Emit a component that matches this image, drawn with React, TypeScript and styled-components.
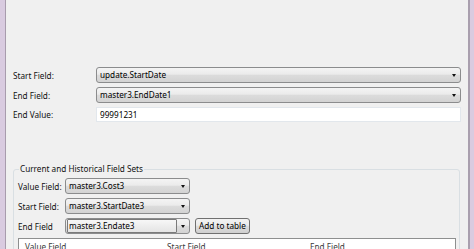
import { FC } from "react";
import styled, { createGlobalStyle } from "styled-components";

const GlobalStyle = createGlobalStyle`
  html, body {
    margin: 0;
    padding: 0;
    background: #f0f0f0;
  }
  body {
    font-family: "Noto Sans", "Open Sans", sans-serif;
    font-size: 8.2px;
    color: #111;
  }
`;

const Frame = styled.div`
  width: 474px;
  height: 249px;
  box-sizing: border-box;
  padding: 0 4px 0 5px;
  background: #d9cbe0;
  overflow: hidden;
`;

const Content = styled.div`
  height: 100%;
  box-sizing: border-box;
  background: #f0f0f0;
  border-left: 1px solid #a89cad;
  border-right: 2px solid #a99fae;
  padding: 67px 7px 0 7px;
`;

const Form = styled.div`
  display: grid;
  grid-template-columns: 83px 1fr;
  row-gap: 4px;
  align-items: center;
`;

const Label = styled.span<{ $width?: number }>`
  line-height: 15px;
  white-space: nowrap;
  width: ${(p) => (p.$width ? `${p.$width}px` : "auto")};
  flex-shrink: 0;
`;

const Select = styled.div<{ $width?: number }>`
  position: relative;
  box-sizing: border-box;
  height: 16px;
  width: ${(p) => (p.$width ? `${p.$width}px` : "100%")};
  border: 1px solid #8b8c8d;
  border-radius: 3px;
  background: linear-gradient(#f4f4f4 0%, #ebebeb 45%, #dcdcdc 50%, #d3d3d3 100%);
  padding-left: 3px;
  line-height: 14px;
  color: #000;
  display: flex;
  align-items: center;
`;

const Arrow = styled.span`
  position: absolute;
  right: 4px;
  top: 6px;
  width: 0;
  height: 0;
  border-left: 2.5px solid transparent;
  border-right: 2.5px solid transparent;
  border-top: 3px solid #111;
`;

const TextInput = styled.div`
  box-sizing: border-box;
  height: 15px;
  border: 1px solid #e2e7ec;
  background: #fff;
  padding-left: 3px;
  line-height: 13px;
  color: #000;
`;

const Group = styled.fieldset`
  margin: 41px 1px 0 0;
  padding: 0 0 0 4px;
  border: 1px solid #d9dfe3;
  border-radius: 3px;
  min-width: 0;
`;

const Legend = styled.legend`
  padding: 0 1px;
  margin-left: 1px;
  line-height: 12px;
`;

const GroupRows = styled.div`
  display: flex;
  flex-direction: column;
  gap: 4px;
  padding-top: 3px;
`;

const Row = styled.div`
  display: flex;
  align-items: center;
  gap: 5px;
`;

const Combo = styled(Select)`
  padding: 1px;
`;

const ComboEdit = styled.div`
  box-sizing: border-box;
  height: 14px;
  width: 110px;
  border: 1px solid #7a7a7a;
  border-radius: 1px;
  background: linear-gradient(#f7f7f7, #e4e4e4);
  padding-left: 1px;
  line-height: 12px;
`;

const Button = styled.div`
  box-sizing: border-box;
  height: 16px;
  padding: 0 3px;
  border: 1px solid #707070;
  border-radius: 3px;
  background: linear-gradient(#f3f3f3 0%, #ebebeb 45%, #dddddd 50%, #cfcfcf 100%);
  line-height: 14px;
  color: #000;
`;

const Table = styled.div`
  margin: 4px 3px 0 0;
  height: 20px;
  background: #fff;
  border: 1px solid #8e8f8f;
  display: grid;
  grid-template-columns: 142px 143px 1fr;
`;

const HeaderCell = styled.div`
  padding: 2px 0 0 6px;
  color: #3a3a3a;
  line-height: 12px;
`;

const App: FC = () => {
  return (
    <>
      <GlobalStyle />
      <Frame>
        <Content>
          <Form>
            <Label>Start Field:</Label>
            <Select>
              update.StartDate
              <Arrow />
            </Select>
            <Label>End Field:</Label>
            <Select>
              master3.EndDate1
              <Arrow />
            </Select>
            <Label>End Value:</Label>
            <TextInput>99991231</TextInput>
          </Form>
          <Group>
            <Legend>Current and Historical Field Sets</Legend>
            <GroupRows>
              <Row>
                <Label $width={42}>Value Field:</Label>
                <Select $width={125}>
                  master3.Cost3
                  <Arrow />
                </Select>
              </Row>
              <Row>
                <Label $width={42}>Start Field:</Label>
                <Select $width={125}>
                  master3.StartDate3
                  <Arrow />
                </Select>
              </Row>
              <Row>
                <Label $width={42}>End Field</Label>
                <Combo $width={125}>
                  <ComboEdit>master3.Endate3</ComboEdit>
                  <Arrow />
                </Combo>
                <Button>Add to table</Button>
              </Row>
            </GroupRows>
            <Table>
              <HeaderCell>Value Field</HeaderCell>
              <HeaderCell>Start Field</HeaderCell>
              <HeaderCell>End Field</HeaderCell>
            </Table>
          </Group>
        </Content>
      </Frame>
    </>
  );
};

export default App;
